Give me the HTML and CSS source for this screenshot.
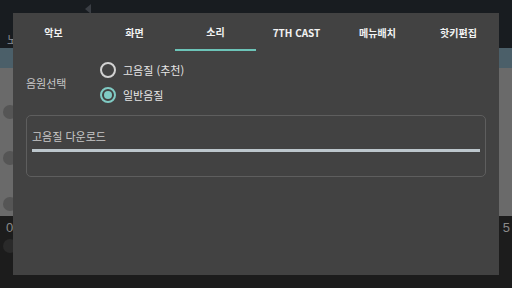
FILE: index.html
```html
<!DOCTYPE html>
<html lang="ko">
<head>
  <meta charset="UTF-8">
  <title>설정 — 소리</title>
  <link rel="stylesheet" href="styles.css">
</head>
<body>
  <div class="backdrop">
    <div class="bg-top"><span class="bg-mark"></span><span class="bg-label">노</span></div>
    <div class="bg-strip"></div>
    <div class="bg-list">
      <span class="bg-dot"></span>
      <span class="bg-dot"></span>
      <span class="bg-dot"></span>
    </div>
    <div class="bg-foot">
      <div class="bg-nums"><span>0</span><span>5</span></div>
      <span class="bg-dot dark"></span>
    </div>
  </div>

  <div class="dialog">
    <div class="tabs">
      <div class="tab">악보</div>
      <div class="tab">화면</div>
      <div class="tab active">소리</div>
      <div class="tab">7TH CAST</div>
      <div class="tab">메뉴배치</div>
      <div class="tab">핫키편집</div>
    </div>
    <div class="body">
      <div class="source-row">
        <div class="source-label">음원선택</div>
        <div class="radios">
          <div class="radio"><span class="ring"></span>고음질 (추천)</div>
          <div class="radio checked"><span class="ring"></span>일반음질</div>
        </div>
      </div>
      <div class="download-box">
        <div class="download-title">고음질 다운로드</div>
        <div class="progress"><div class="progress-fill" style="width:100%"></div></div>
      </div>
    </div>
  </div>
</body>
</html>
```

FILE: styles.css
```css
html, body { margin: 0; padding: 0; }
body { width: 512px; height: 288px; overflow: hidden; position: relative; font-family: "Noto Sans CJK KR", "Noto Sans", sans-serif; background: #1c1c1c; }

.backdrop { display: flex; flex-direction: column; height: 288px; }
.bg-top { height: 48px; background: #181c20; position: relative; }
.bg-mark { position: absolute; left: 85px; top: 4px; width: 0; height: 0; border-top: 5px solid transparent; border-bottom: 5px solid transparent; border-right: 6px solid #3a3e44; }
.bg-label { position: absolute; left: 7px; top: 31px; color: #8a9096; font-size: 11px; }
.bg-strip { height: 20px; background: #4b5f69; }
.bg-list { height: 148px; background: #6a6a6a; display: flex; flex-direction: column; gap: 32px; padding: 37px 0 0 3px; box-sizing: border-box; }
.bg-dot { display: block; width: 14px; height: 14px; border-radius: 50%; background: #555; }
.bg-dot.dark { background: #2a2a2a; margin: 4px 0 0 3px; }
.bg-foot { flex: 1; background: #1c1c1c; }
.bg-nums { display: flex; justify-content: space-between; padding: 4px 2px 0 6px; color: #8a8a8a; font-family: "Liberation Sans", sans-serif; font-size: 13px; }

.dialog { position: absolute; left: 13px; top: 13px; width: 486px; height: 262px; background: #424242; }
.tabs { display: grid; grid-template-columns: repeat(6, 1fr); height: 38px; }
.tab { display: flex; align-items: center; justify-content: center; color: #f2f2f2; font-size: 10px; font-weight: bold; padding-top: 1px; }
.tab.active { border-bottom: 2px solid #6cc4b8; }

.body { padding: 11px 13px 0 13px; }
.source-row { display: flex; align-items: center; }
.source-label { width: 74px; color: #c8c8c8; font-size: 11px; }
.radios { display: flex; flex-direction: column; gap: 9px; }
.radio { display: flex; align-items: center; gap: 7px; color: #e6e6e6; font-size: 11px; height: 16px; }
.ring { width: 12px; height: 12px; border: 2px solid #d2d2d2; border-radius: 50%; box-sizing: content-box; position: relative; }
.radio.checked .ring { border-color: #80cbc4; }
.radio.checked .ring::after { content: ""; position: absolute; left: 2px; top: 2px; width: 8px; height: 8px; border-radius: 50%; background: #80cbc4; }

.download-box { margin-top: 12px; height: 62px; border: 1px solid #5e5e5e; border-radius: 5px; padding: 12px 5px 0 5px; box-sizing: border-box; }
.download-title { color: #c8c8c8; font-size: 11px; line-height: 16px; }
.progress { margin-top: 5px; height: 3px; background: #2e2e2e; }
.progress-fill { height: 3px; background: #bcc6cc; }
```
